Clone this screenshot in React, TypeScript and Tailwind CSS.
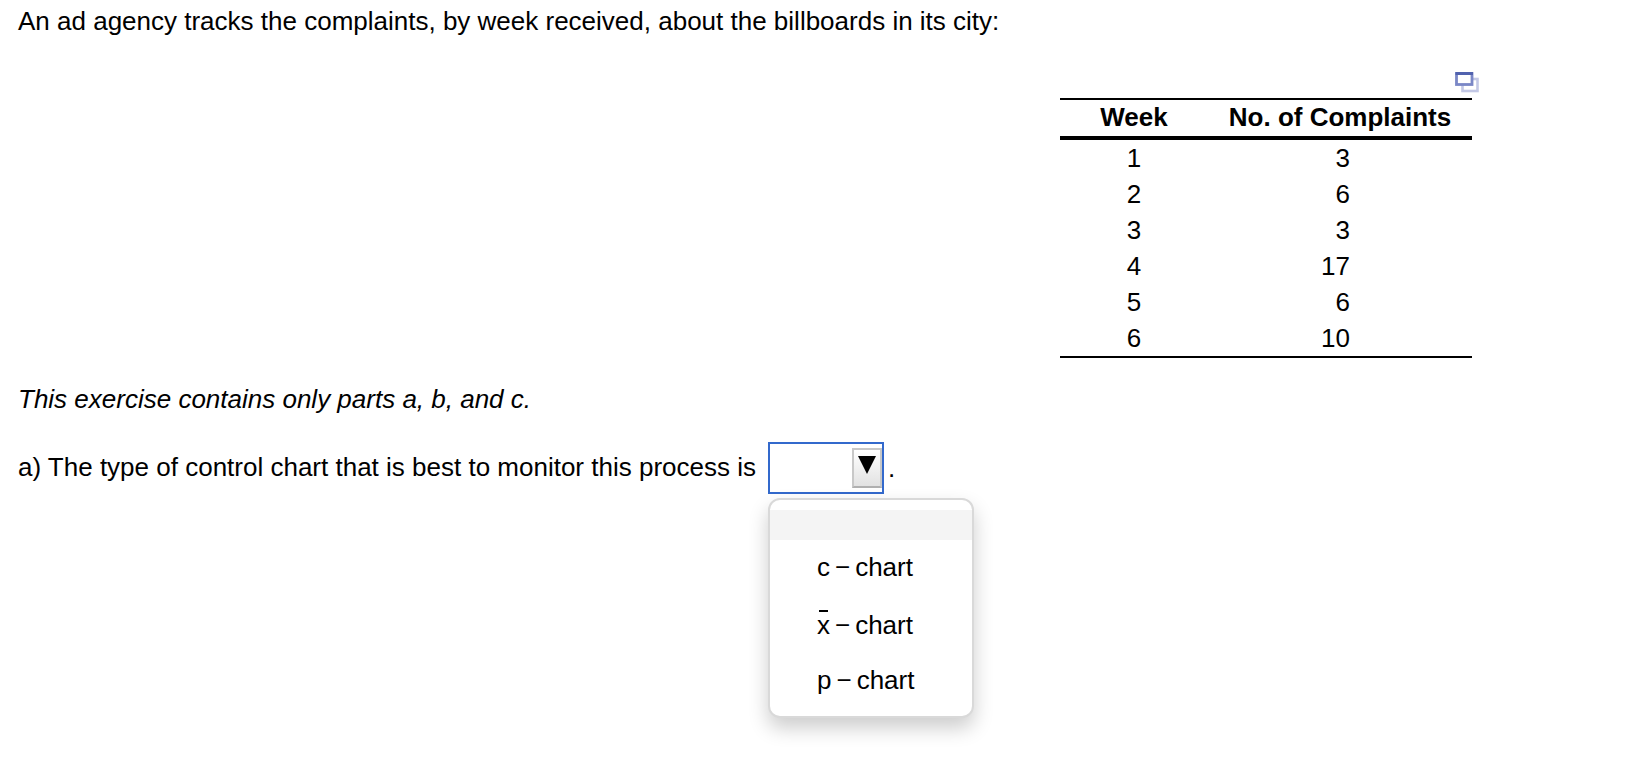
import { useState } from "react";
import type { ReactNode } from "react";

type Complaint = { week: number; count: number };

const complaints: Complaint[] = [
    { week: 1, count: 3 },
    { week: 2, count: 6 },
    { week: 3, count: 3 },
    { week: 4, count: 17 },
    { week: 5, count: 6 },
    { week: 6, count: 10 },
];

type ChartOption = { value: string; symbol: ReactNode; row: string };

const XBar = () => (
    <span className="relative">
        x
        <span className="absolute left-0.5 top-0 h-0.5 w-[9px] bg-black" />
    </span>
);

const options: ChartOption[] = [
    { value: "c", symbol: "c", row: "h-[54px]" },
    { value: "x-bar", symbol: <XBar />, row: "h-[62px]" },
    { value: "p", symbol: "p", row: "h-12" },
];

const PopOutIcon = () => (
    <svg width="26" height="22" viewBox="0 0 26 22" fill="none" aria-hidden="true">
        <rect x="8.5" y="8" width="15" height="12" stroke="#c3c8e5" strokeWidth="2.6" />
        <rect x="2.5" y="2.5" width="15.5" height="11" fill="#fff" stroke="#7a87c6" strokeWidth="2.8" />
        <path d="M1.5 2.5h17.5" stroke="#5162ae" strokeWidth="3" />
    </svg>
);

const ComplaintsTable = () => (
    <div className="ml-auto mr-[164px] mt-[33px] w-[420px]">
        <button type="button" aria-label="Open table in new window" className="ml-auto block">
            <PopOutIcon />
        </button>
        <table className="mt-[5px] w-[412px] table-fixed border-separate border-spacing-0 border-b-2 border-black">
            <thead>
                <tr>
                    <th className="h-[42px] w-[148px] border-t-2 border-b-4 border-black p-0 pb-0.5 font-bold">Week</th>
                    <th className="h-[42px] border-t-2 border-b-4 border-black p-0 pb-0.5 font-bold">
                        No. of Complaints
                    </th>
                </tr>
            </thead>
            <tbody>
                {complaints.map(({ week, count }) => (
                    <tr key={week}>
                        <td className="h-9 p-0 text-center">{week}</td>
                        <td className="h-9 p-0 pr-[122px] text-right">{count}</td>
                    </tr>
                ))}
            </tbody>
        </table>
    </div>
);

const ChartSelect = () => {
    const [value, setValue] = useState("");
    const [open, setOpen] = useState(true);

    const choose = (next: string) => {
        setValue(next);
        setOpen(false);
    };

    return (
        <div className="relative ml-3">
            <select
                id="chart-type"
                value={value}
                onChange={(e) => setValue(e.target.value)}
                onClick={() => setOpen(true)}
                className="block h-[52px] w-[116px] appearance-none border-2 border-[#3369cc] bg-white pl-2 outline-none"
            >
                <option value=""></option>
                <option value="c">c</option>
                <option value="x-bar">x̄</option>
                <option value="p">p</option>
            </select>
            <span className="pointer-events-none absolute right-0.5 top-1.5 flex h-10 w-[30px] justify-center border-2 border-[#c8c8c8] border-b-[#b0b0b0] bg-linear-to-b from-white to-[#e2e2e2] pt-1.5">
                <svg width="18" height="18" viewBox="0 0 18 18" aria-hidden="true">
                    <path d="M0 0h18L9 18z" />
                </svg>
            </span>

            {open && (
                <ul className="absolute left-0 top-14 w-[206px] rounded-xl border-2 border-[#d9d9d9] bg-white pb-3 pt-2.5 shadow-[0_10px_20px_rgba(0,0,0,0.2)]">
                    <li>
                        <button
                            type="button"
                            aria-label="Blank"
                            onClick={() => choose("")}
                            className="block h-[30px] w-full bg-[#f4f4f4]"
                        />
                    </li>
                    {options.map((option) => (
                        <li key={option.value}>
                            <button
                                type="button"
                                onClick={() => choose(option.value)}
                                className={`flex w-full items-center gap-[5px] pl-[47px] ${option.row}`}
                            >
                                <span>{option.symbol}</span>
                                <span>−</span>
                                <span>chart</span>
                            </button>
                        </li>
                    ))}
                </ul>
            )}
        </div>
    );
};

const App = () => {
    return (
        <main className="min-h-screen bg-white pl-[18px] pt-1 font-['Liberation_Sans',Arial,sans-serif] text-[26px] leading-[34px] text-black">
            <p>An ad agency tracks the complaints, by week received, about the billboards in its city:</p>

            <ComplaintsTable />

            <p className="mt-6 italic">This exercise contains only parts a, b, and c.</p>

            <div className="mt-[26px] flex items-center">
                <label htmlFor="chart-type" className="pb-0.5">
                    a) The type of control chart that is best to monitor this process is
                </label>
                <ChartSelect />
                <span className="ml-1">.</span>
            </div>
        </main>
    );
};

export default App;
